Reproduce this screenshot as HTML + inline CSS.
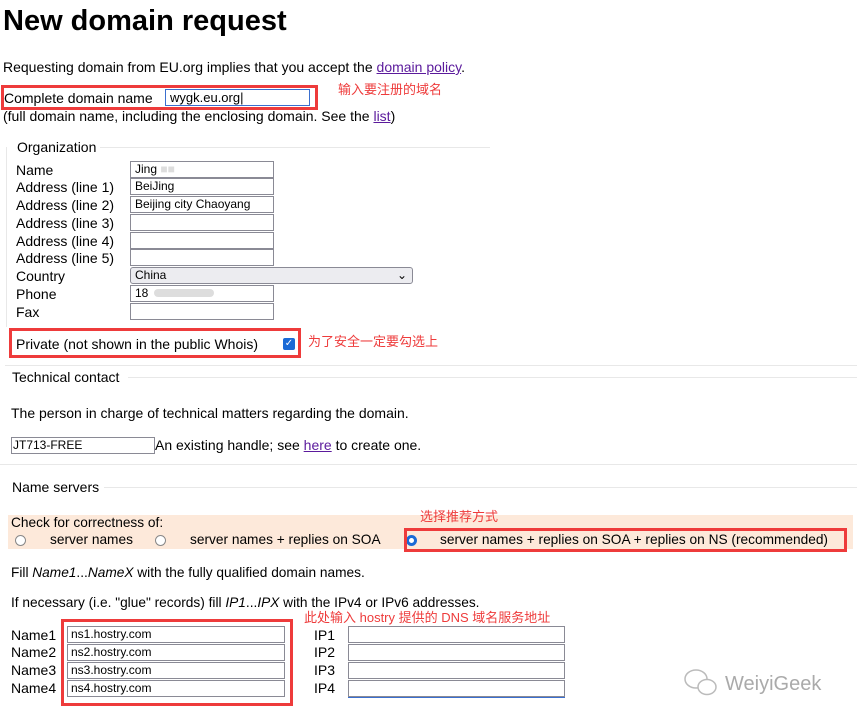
<!DOCTYPE html>
<html><head><meta charset="utf-8"><style>
*{margin:0;padding:0;box-sizing:border-box}
body{width:857px;height:722px;background:#fff;position:relative;overflow:hidden;font-family:"Liberation Sans",Arial,sans-serif;font-size:14px;color:#000}
.a{position:absolute;white-space:nowrap;line-height:16px}
.in{position:absolute;border:1px solid #8a8a95;background:#fff;height:17px;font-size:12px;line-height:15px;padding-left:4px;font-family:"Liberation Sans",sans-serif}
.red{position:absolute;border:3px solid #ee3b3b}
.cn{position:absolute;color:#ee3b3b;font-size:13px;font-family:"Liberation Sans","Noto Sans CJK SC",sans-serif;white-space:nowrap;line-height:14px}
.hl{position:absolute;height:1px;background:#e8e8e8}
a{color:#5b1a9c;text-decoration:underline}
.rad{position:absolute;width:11px;height:11px;border:1px solid #888;border-radius:50%;background:#fff}
</style></head><body>
<div class="a" style="left:3px;top:5px;font-size:29px;font-weight:bold;line-height:33px">New domain request</div>
<div class="a" style="left:3px;top:59px">Requesting domain from EU.org implies that you accept the <a>domain policy</a>.</div>
<div class="red" style="left:1px;top:85px;width:317px;height:25px"></div>
<div class="a" style="left:4px;top:90px">Complete domain name</div>
<div class="in" style="left:165px;top:89px;width:145px;border:1px solid #3a6fcf;font-size:13px">wygk.eu.org|</div>
<div class="cn" style="left:338px;top:83px">输入要注册的域名</div>
<div class="a" style="left:3px;top:108px">(full domain name, including the enclosing domain. See the <a>list</a>)</div>

<div class="hl" style="left:100px;top:147px;width:390px"></div>
<div class="a" style="left:6px;top:147px;width:1px;height:180px;background:#e8e8e8"></div>
<div class="a" style="left:17px;top:139px">Organization</div>
<div class="a" style="left:16px;top:162px">Name</div>
<div class="a" style="left:16px;top:179px">Address (line 1)</div>
<div class="a" style="left:16px;top:197px">Address (line 2)</div>
<div class="a" style="left:16px;top:215px">Address (line 3)</div>
<div class="a" style="left:16px;top:233px">Address (line 4)</div>
<div class="a" style="left:16px;top:250px">Address (line 5)</div>
<div class="a" style="left:16px;top:268px">Country</div>
<div class="a" style="left:16px;top:286px">Phone</div>
<div class="a" style="left:16px;top:304px">Fax</div>
<div class="in" style="left:130px;top:161px;width:144px">Jing <span style="color:#ddd">■■</span></div>
<div class="in" style="left:130px;top:178px;width:144px">BeiJing</div>
<div class="in" style="left:130px;top:196px;width:144px;overflow:hidden">Beijing city Chaoyang Dist</div>
<div class="in" style="left:130px;top:214px;width:144px"></div>
<div class="in" style="left:130px;top:232px;width:144px"></div>
<div class="in" style="left:130px;top:249px;width:144px"></div>
<div class="in" style="left:130px;top:267px;width:283px;background:#ececf0;border-radius:3px">China<span style="position:absolute;right:5px;top:0">⌄</span></div>
<div class="in" style="left:130px;top:285px;width:144px">18<span style="display:inline-block;width:60px;height:8px;background:#ddd;margin-left:6px;border-radius:4px"></span></div>
<div class="in" style="left:130px;top:303px;width:144px"></div>
<div class="red" style="left:9px;top:328px;width:292px;height:30px"></div>
<div class="a" style="left:16px;top:336px">Private (not shown in the public Whois)</div>
<div style="position:absolute;left:283px;top:338px;width:12px;height:12px;background:#1a6ad6;border-radius:2px;color:#fff;font-size:10px;line-height:12px;text-align:center">✓</div>
<div class="cn" style="left:308px;top:335px">为了安全一定要勾选上</div>

<div class="hl" style="left:5px;top:365px;width:852px"></div>
<div class="hl" style="left:128px;top:377px;width:729px"></div>
<div class="a" style="left:12px;top:369px">Technical contact</div>
<div class="a" style="left:11px;top:405px">The person in charge of technical matters regarding the domain.</div>
<div class="in" style="left:11px;top:437px;width:144px;padding-left:1px">JT713-FREE</div>
<div class="a" style="left:155px;top:437px">An existing handle; see <a>here</a> to create one.</div>
<div class="hl" style="left:0;top:464px;width:857px"></div>
<div class="hl" style="left:104px;top:487px;width:753px"></div>
<div class="a" style="left:12px;top:479px">Name servers</div>

<div style="position:absolute;left:8px;top:515px;width:845px;height:34px;background:#fde9da"></div>
<div class="a" style="left:11px;top:515px;font-size:13.7px">Check for correctness of:</div>
<div class="rad" style="left:15px;top:535px"></div>
<div class="a" style="left:50px;top:532px;font-size:13.7px">server names</div>
<div class="rad" style="left:155px;top:535px"></div>
<div class="a" style="left:190px;top:532px;font-size:13.7px">server names + replies on SOA</div>
<div class="rad" style="left:406px;top:535px;border:3px solid #1a6ad6"></div>
<div class="a" style="left:440px;top:532px;font-size:13.7px">server names + replies on SOA + replies on NS (recommended)</div>
<div class="red" style="left:404px;top:528px;width:443px;height:24px"></div>
<div class="cn" style="left:420px;top:510px">选择推荐方式</div>

<div class="a" style="left:11px;top:565px;font-size:13.7px">Fill <i>Name1</i>...<i>NameX</i> with the fully qualified domain names.</div>
<div class="a" style="left:11px;top:595px;font-size:13.7px">If necessary (i.e. "glue" records) fill <i>IP1</i>...<i>IPX</i> with the IPv4 or IPv6 addresses.</div>
<div class="cn" style="left:304px;top:611px">此处输入 hostry 提供的 DNS 域名服务地址</div>
<div class="red" style="left:61px;top:619px;width:232px;height:87px"></div>
<div class="a" style="left:11px;top:627px">Name1</div>
<div class="a" style="left:11px;top:644px">Name2</div>
<div class="a" style="left:11px;top:662px">Name3</div>
<div class="a" style="left:11px;top:680px">Name4</div>
<div class="in" style="left:67px;top:626px;width:218px;padding-left:3px">ns1.hostry.com</div>
<div class="in" style="left:67px;top:644px;width:218px;padding-left:3px">ns2.hostry.com</div>
<div class="in" style="left:67px;top:662px;width:218px;padding-left:3px">ns3.hostry.com</div>
<div class="in" style="left:67px;top:680px;width:218px;padding-left:3px">ns4.hostry.com</div>
<div class="a" style="left:314px;top:627px">IP1</div>
<div class="a" style="left:314px;top:644px">IP2</div>
<div class="a" style="left:314px;top:662px">IP3</div>
<div class="a" style="left:314px;top:680px">IP4</div>
<div class="in" style="left:348px;top:626px;width:217px"></div>
<div class="in" style="left:348px;top:644px;width:217px"></div>
<div class="in" style="left:348px;top:662px;width:217px"></div>
<div class="in" style="left:348px;top:680px;width:217px"></div>
<div style="position:absolute;left:348px;top:697px;width:217px;height:1px;background:#3a6fcf"></div>
<svg style="position:absolute;left:683px;top:668px" width="40" height="30" viewBox="0 0 40 30"><ellipse cx="13" cy="11" rx="11" ry="9" fill="none" stroke="#bbb" stroke-width="1.5"/><ellipse cx="24" cy="19" rx="9" ry="7.5" fill="#fff" stroke="#bbb" stroke-width="1.5"/></svg>
<div class="a" style="left:725px;top:673px;font-size:20px;line-height:22px;color:#aaa">WeiyiGeek</div>
</body></html>
